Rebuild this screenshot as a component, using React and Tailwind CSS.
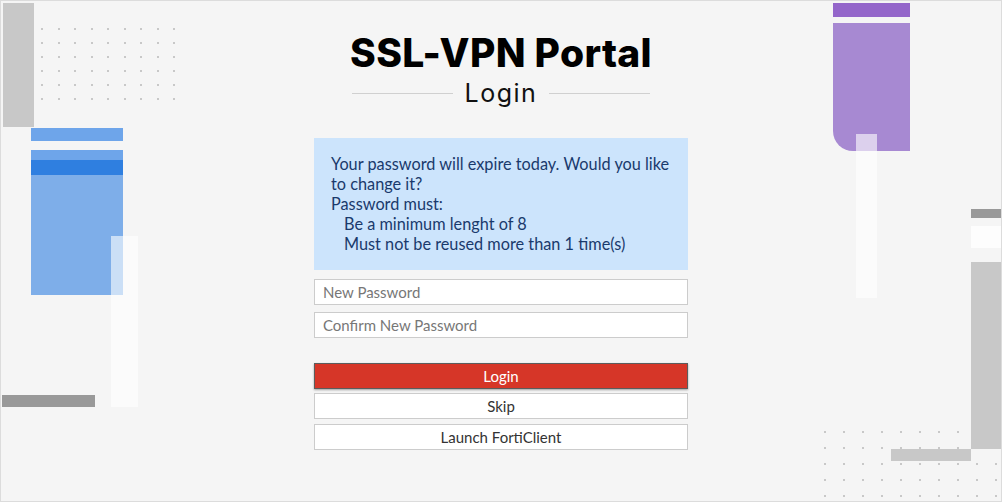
import React from 'react'

const Dots = ({ cols, rows, className }) => (
  <div className={className}>
    {Array.from({ length: cols * rows }).map((_, i) => (
      <span key={i} className="block w-[2px] h-[2px] bg-[#c8c8c8]" />
    ))}
  </div>
)

export default function App() {
  return (
    <div className="relative w-[1002px] h-[502px] overflow-hidden bg-[#f5f5f5] border border-[#dcdcdc] box-border font-['Lato',sans-serif]">
      {/* background decorations */}
      <div className="absolute left-[2px] top-[2px] w-[31px] h-[124px] bg-[#c8c8c8]" />
      <Dots cols={9} rows={6} className="absolute left-[40px] top-[27px] grid grid-cols-9 gap-x-[14.5px] gap-y-[12px]" />
      <div className="absolute left-[30px] top-[127px] w-[92px] h-[13px] bg-[#6ea5ea]" />
      <div className="absolute left-[30px] top-[149px] w-[92px] h-[145px] bg-[#7eaee9] flex flex-col">
        <div className="h-[10px] bg-[#6ea5ea]" />
        <div className="h-[15px] bg-[#2f7fe0]" />
      </div>
      <div className="absolute left-[110px] top-[235px] w-[27px] h-[171px] bg-white/60" />
      <div className="absolute left-[1px] top-[394px] w-[93px] h-[12px] bg-[#999999]" />

      <div className="absolute left-[832px] top-[2px] w-[77px] h-[14px] bg-[#9466ca]" />
      <div className="absolute left-[832px] top-[22px] w-[77px] h-[128px] bg-[#a789d2] rounded-bl-[20px]" />
      <div className="absolute left-[855px] top-[133px] w-[21px] h-[164px] bg-white/60" />
      <div className="absolute left-[970px] top-[208px] w-[30px] h-[9px] bg-[#999999]" />
      <div className="absolute left-[970px] top-[225px] w-[30px] h-[22px] bg-[#fdfdfd]" />
      <Dots cols={10} rows={5} className="absolute left-[823px] top-[430px] grid grid-cols-10 gap-x-[17px] gap-y-[14px]" />
      <div className="absolute left-[970px] top-[261px] w-[30px] h-[187px] bg-[#c8c8c8]" />
      <div className="absolute left-[890px] top-[448px] w-[80px] h-[12px] bg-[#c8c8c8]" />

      {/* login form */}
      <div className="relative flex flex-col items-center pt-[30px]">
        <h1 className="font-['Inter',sans-serif] font-extrabold text-[39px] leading-[44px] text-black tracking-[0.3px]">
          SSL-VPN Portal
        </h1>
        <div className="flex items-center gap-[12px] w-[298px] mt-[3px]">
          <div className="flex-1 h-px bg-[#d0d0d0]" />
          <span className="font-['Inter',sans-serif] text-[25px] leading-[30px] text-[#111] tracking-[1.5px]">Login</span>
          <div className="flex-1 h-px bg-[#d0d0d0]" />
        </div>

        <div className="w-[374px] mt-[30px] flex flex-col">
          <div className="h-[132px] bg-[#cce4fc] pt-[16px] px-[17px] text-[16.3px] leading-[20px] text-[#1a3a6c]">
            <p>Your password will expire today. Would you like to change it?</p>
            <p>Password must:</p>
            <p className="pl-[13px]">Be a minimum lenght of 8</p>
            <p className="pl-[13px]">Must not be reused more than 1 time(s)</p>
          </div>

          <input
            type="password"
            placeholder="New Password"
            className="mt-[9px] h-[26px] bg-white border border-[#cccccc] px-[8px] text-[15px] placeholder:text-[#777777] outline-none"
          />
          <input
            type="password"
            placeholder="Confirm New Password"
            className="mt-[7px] h-[26px] bg-white border border-[#cccccc] px-[8px] text-[15px] placeholder:text-[#777777] outline-none"
          />

          <button className="mt-[25px] h-[26px] bg-[#d63628] border border-[#5c5c5c] shadow-[0_1px_2px_rgba(0,0,0,0.35)] text-white text-[15px] leading-none">
            Login
          </button>
          <button className="mt-[4px] h-[26px] bg-white border border-[#cccccc] text-[#333] text-[15px] leading-none">
            Skip
          </button>
          <button className="mt-[5px] h-[26px] bg-white border border-[#cccccc] text-[#333] text-[15px] leading-none">
            Launch FortiClient
          </button>
        </div>
      </div>
    </div>
  )
}
